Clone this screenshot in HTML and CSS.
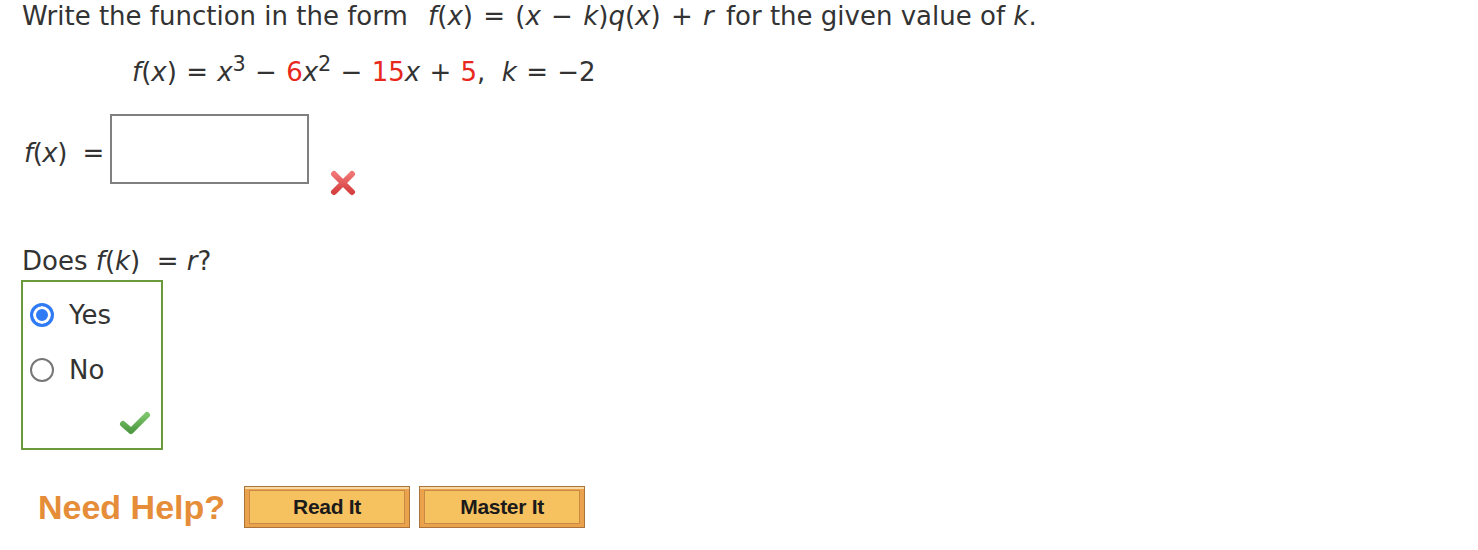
FILE: index.html
```html
<!DOCTYPE html>
<html lang="en">
<head>
    <meta charset="UTF-8">
    <title>Remainder Theorem</title>
    <link rel="stylesheet" href="styles.css">
</head>
<body>
    <div class="question">
        <p class="prompt">Write the function in the form <span class="math"><i>f</i>(<i>x</i>) <span class="op">=</span> (<i>x</i> <span class="op">−</span> <i>k</i>)<i>q</i>(<i>x</i>) <span class="op">+</span> <i>r</i></span> for the given value of <i>k</i>.</p>

        <p class="given"><i>f</i>(<i>x</i>) <span class="op">=</span> <i>x</i><sup>3</sup> <span class="op">−</span> <span class="red">6</span><i>x</i><sup>2</sup> <span class="op">−</span> <span class="red">15</span><i>x</i> <span class="op">+</span> <span class="red">5</span>, &nbsp;<i>k</i> <span class="op">=</span> −2</p>

        <div class="answer-row">
            <span class="lhs"><i>f</i>(<i>x</i>) &nbsp;=</span>
            <div class="answer-box"></div>
            <svg class="mark-wrong" width="28" height="26" viewBox="0 0 28 26">
                <defs>
                    <linearGradient id="xg" x1="0" y1="0" x2="0" y2="1">
                        <stop offset="0" stop-color="#f07474"/>
                        <stop offset="1" stop-color="#d64040"/>
                    </linearGradient>
                </defs>
                <path d="M5 4 L23 22 M23 4 L5 22" stroke="url(#xg)" stroke-width="6" stroke-linecap="round"/>
            </svg>
        </div>

        <p class="ask">Does <i>f</i>(<i>k</i>) &nbsp;= <i>r</i>?</p>

        <div class="choices">
            <label class="choice">
                <span class="radio checked"></span>
                <span>Yes</span>
            </label>
            <label class="choice">
                <span class="radio"></span>
                <span>No</span>
            </label>
            <svg class="mark-right" width="34" height="28" viewBox="0 0 34 28">
                <defs>
                    <linearGradient id="cg" x1="0" y1="0" x2="0" y2="1">
                        <stop offset="0" stop-color="#7cc46a"/>
                        <stop offset="1" stop-color="#4f9a43"/>
                    </linearGradient>
                </defs>
                <path d="M5 16 L13 23 L29 7" fill="none" stroke="url(#cg)" stroke-width="6" stroke-linecap="round" stroke-linejoin="round"/>
            </svg>
        </div>

        <div class="help">
            <span class="help-label">Need Help?</span>
            <button class="help-btn"><span>Read It</span></button>
            <button class="help-btn"><span>Master It</span></button>
        </div>
    </div>
</body>
</html>
```

FILE: styles.css
```css
:root {
    --text: #333333;
    --red: #e8281c;
    --green: #6a9a3c;
}

* {
    margin: 0;
    padding: 0;
    box-sizing: border-box;
}

body {
    font-family: 'DejaVu Sans', Verdana, sans-serif;
    font-size: 26px;
    color: var(--text);
    background: white;
}

.question {
    padding: 1px 0 0 22px;
}

.prompt {
    line-height: 30px;
}

.math {
    margin: 0 4px 0 12px;
}

.op {
    margin: 0 2px;
}

.given {
    margin: 26px 0 0 110px;
    line-height: 30px;
}

.given .op {
    margin: 0 1px;
}

sup {
    font-size: 0.8em;
    line-height: 0;
    vertical-align: 0.5em;
}

.red {
    color: var(--red);
}

.answer-row {
    display: flex;
    align-items: flex-end;
    margin-top: 27px;
}

.lhs {
    align-self: center;
    width: 88px;
    padding-left: 2px;
    padding-top: 8px;
    letter-spacing: -0.5px;
}

.answer-box {
    width: 199px;
    height: 70px;
    border: 2px solid #808080;
}

.mark-wrong {
    margin: 0 0 -12px 20px;
}

.ask {
    margin-top: 62px;
    line-height: 30px;
}

.choices {
    position: relative;
    width: 142px;
    height: 170px;
    margin: 4px 0 0 -1px;
    border: 2px solid var(--green);
    padding: 18px 0 0 7px;
}

.choice {
    display: flex;
    align-items: center;
    gap: 15px;
    height: 30px;
    margin-bottom: 25px;
}

.radio {
    width: 24px;
    height: 24px;
    border-radius: 50%;
    border: 2px solid #767676;
    background: white;
}

.radio.checked {
    border: 3px solid #2f7bf5;
    box-shadow: inset 0 0 0 3px white;
    background: #2f7bf5;
}

.mark-right {
    position: absolute;
    left: 95px;
    top: 126px;
}

.help {
    display: flex;
    align-items: center;
    margin-top: 36px;
    padding-left: 16px;
}

.help-label {
    font-family: 'Liberation Sans', Arial, sans-serif;
    font-weight: bold;
    font-size: 34px;
    color: #e58d38;
    margin-right: 19px;
}

.help-btn {
    width: 166px;
    height: 42px;
    margin-right: 9px;
    border: 1px solid #a9733a;
    background: #eba24d;
    padding: 3px 4px;
    cursor: pointer;
    box-shadow: inset 0 2px 0 #f8d9a6;
}

.help-btn span {
    display: flex;
    align-items: center;
    justify-content: center;
    height: 100%;
    background: #f6c15f;
    border: 1px solid #c88a45;
    font-family: 'Liberation Sans', Arial, sans-serif;
    font-weight: bold;
    font-size: 21px;
    color: #1a1a1a;
    letter-spacing: -0.3px;
}
```
